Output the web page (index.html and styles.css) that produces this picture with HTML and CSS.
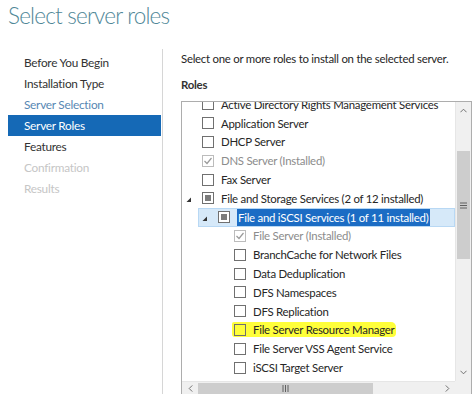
FILE: index.html
```html
<!DOCTYPE html>
<html lang="en">

<head>
    <meta charset="UTF-8">
    <title>Add Roles and Features Wizard</title>
    <link rel="stylesheet" href="styles.css">
</head>

<body>
    <div class="title">Select server roles</div>
    <div class="page">
        <ul class="steps">
            <li>Before You Begin</li>
            <li>Installation Type</li>
            <li class="visited">Server Selection</li>
            <li class="current">Server Roles</li>
            <li>Features</li>
            <li class="disabled">Confirmation</li>
            <li class="disabled">Results</li>
        </ul>
        <div class="content">
            <p class="lead">Select one or more roles to install on the selected server.</p>
            <h2 class="label">Roles</h2>
            <div class="listbox">
                <div class="viewport">
                    <ul class="tree">
                        <li class="row"><span class="exp"></span><span class="cb"></span><span class="txt">Active Directory Rights Management Services</span></li>
                        <li class="row"><span class="exp"></span><span class="cb"></span><span class="txt">Application Server</span></li>
                        <li class="row"><span class="exp"></span><span class="cb"></span><span class="txt">DHCP Server</span></li>
                        <li class="row installed"><span class="exp"></span><span class="cb checked"><svg viewBox="0 0 10 10"><polyline points="1.5,5 4,7.5 8.5,2"/></svg></span><span class="txt">DNS Server (Installed)</span></li>
                        <li class="row"><span class="exp"></span><span class="cb"></span><span class="txt">Fax Server</span></li>
                        <li class="row"><span class="exp open"><svg viewBox="0 0 6 6"><polygon points="5,0.5 5,5 0.5,5"/></svg></span><span class="cb partial"></span><span class="txt">File and Storage Services (2 of 12 installed)</span></li>
                        <li class="row lvl1 selected"><span class="exp open"><svg viewBox="0 0 6 6"><polygon points="5,0.5 5,5 0.5,5"/></svg></span><span class="cb partial"></span><span class="txt"><span class="sel">File and iSCSI Services (1 of 11 installed)</span></span></li>
                        <li class="row lvl2 installed"><span class="exp"></span><span class="cb checked"><svg viewBox="0 0 10 10"><polyline points="1.5,5 4,7.5 8.5,2"/></svg></span><span class="txt">File Server (Installed)</span></li>
                        <li class="row lvl2"><span class="exp"></span><span class="cb"></span><span class="txt">BranchCache for Network Files</span></li>
                        <li class="row lvl2"><span class="exp"></span><span class="cb"></span><span class="txt">Data Deduplication</span></li>
                        <li class="row lvl2"><span class="exp"></span><span class="cb"></span><span class="txt">DFS Namespaces</span></li>
                        <li class="row lvl2"><span class="exp"></span><span class="cb"></span><span class="txt">DFS Replication</span></li>
                        <li class="row lvl2"><span class="exp"></span><span class="marker"><span class="cb"></span><span class="txt">File Server Resource Manager</span></span></li>
                        <li class="row lvl2"><span class="exp"></span><span class="cb"></span><span class="txt">File Server VSS Agent Service</span></li>
                        <li class="row lvl2"><span class="exp"></span><span class="cb"></span><span class="txt">iSCSI Target Server</span></li>
                    </ul>
                </div>
                <div class="vbar">
                    <span class="btn"><svg viewBox="0 0 8 5"><polyline points="0.5,4.5 4,1 7.5,4.5"/></svg></span>
                    <span class="track">
                        <span class="thumb"><svg viewBox="0 0 7 6"><path d="M0 0.5H7M0 3H7M0 5.5H7"/></svg></span>
                    </span>
                    <span class="btn"><svg viewBox="0 0 8 5"><polyline points="0.5,0.5 4,4 7.5,0.5"/></svg></span>
                </div>
                <div class="hbar">
                    <span class="btn"><svg viewBox="0 0 5 8"><polyline points="4.5,0.5 1,4 4.5,7.5"/></svg></span>
                    <span class="track">
                        <span class="thumb"><svg viewBox="0 0 6 7"><path d="M0.5 0V7M3 0V7M5.5 0V7"/></svg></span>
                    </span>
                    <span class="btn"><svg viewBox="0 0 5 8"><polyline points="0.5,0.5 4,4 0.5,7.5"/></svg></span>
                </div>
                <div class="corner"></div>
            </div>
        </div>
    </div>
</body>

</html>
```

FILE: styles.css
```css
*{
    margin: 0;padding: 0;
    box-sizing: border-box;
}
ul{
    list-style: none;
}
body{
    width: 474px;
    height: 394px;
    overflow: hidden;
    background: #fff;
    font-family: Lato, "Open Sans", sans-serif;
    font-size: 11.4px;
    letter-spacing: -0.25px;
    color: #262626;
}
.title{
    height: 49px;
    padding: 1px 0 0 8px;
    font-size: 22.5px;
    font-weight: 300;
    line-height: 30px;
    letter-spacing: -0.8px;
    color: #508797;
}
.page{
    display: flex;
    height: 345px;
}
/* left wizard steps */
.steps{
    width: 163px;
    padding: 3px 1px 0 8px;
    border-right: 1px solid #d6d6d6;
    font-size: 11.8px;
}
.steps li{
    height: 21px;
    line-height: 21px;
    padding-left: 16px;
    color: #333;
}
.steps .visited{
    color: #5787b3;
}
.steps .current{
    background: #1569b6;
    color: #fff;
}
.steps .disabled{
    color: #c6c6c6;
}
/* right side */
.content{
    flex: 1;
    padding: 1px 2px 0 18px;
}
.lead{
    height: 26px;
    line-height: 18px;
}
.label{
    height: 25px;
    font-size: 11.4px;
    font-weight: 700;
    line-height: 18px;
    color: #333;
}
.listbox{
    display: grid;
    grid-template-columns: 1fr 16px;
    grid-template-rows: 1fr 14px;
    height: 295px;
    border: 1px solid #adadad;
}
.viewport{
    overflow: hidden;
}
.tree{
    margin-top: -7px;
}
.row{
    display: flex;
    align-items: center;
    height: 18.8px;
    padding-left: 4px;
    white-space: nowrap;
}
.lvl1{
    margin-left: 16px;
}
.lvl2{
    margin-left: 32px;
}
.exp{
    width: 16px;
    height: 100%;
    display: flex;
    align-items: center;
}
.exp svg{
    width: 6px;
    height: 6px;
    margin-top: 3px;
    fill: #333;
}
.cb{
    position: relative;
    width: 12px;
    height: 12px;
    border: 1px solid #707070;
    background: #fff;
    margin-right: 7px;
    flex: none;
}
.cb svg{
    display: block;
    width: 10px;
    height: 10px;
    fill: none;
    stroke: #9a9a9a;
    stroke-width: 1.2;
}
.installed .cb{
    border-color: #bcbcbc;
}
.installed .txt{
    color: #8c8c8c;
}
.partial::after{
    content: "";
    position: absolute;
    left: 2px;
    top: 2px;
    width: 6px;
    height: 6px;
    background: #7c7c7c;
}
.selected{
    background: #d6e9f9;
    border: 1px solid #b8d8f4;
    padding-left: 3px;
}
.sel{
    background: #1b6cc4;
    color: #fff;
    padding: 2px 1px 2px 1px;
}
.marker{
    display: flex;
    align-items: center;
    height: 15px;
    padding: 0 2px 0 2px;
    margin-left: -2px;
    background: #ffff3a;
    border-radius: 2px 5px 4px 3px;
}
.marker .cb{
    background: transparent;
}
/* scrollbars */
.vbar, .hbar, .corner{
    background: #f0f0f0;
}
.vbar{
    display: flex;
    flex-direction: column;
    border-left: 1px solid #e6e6e6;
}
.hbar{
    display: flex;
    border-top: 1px solid #e6e6e6;
}
.btn{
    display: flex;
    align-items: center;
    justify-content: center;
    flex: none;
}
.vbar .btn{
    height: 17px;
}
.hbar .btn{
    width: 16px;
}
.btn svg{
    width: 7px;
    height: 7px;
    fill: none;
    stroke: #606060;
    stroke-width: 1;
}
.track{
    flex: 1;
    display: flex;
}
.vbar .track{
    flex-direction: column;
    padding-top: 32px;
}
.vbar .thumb{
    height: 108px;
    margin: 0 1px;
}
.hbar .thumb{
    width: 175px;
    margin: 1px 0;
}
.thumb{
    display: flex;
    align-items: center;
    justify-content: center;
    background: #cdcdcd;
}
.thumb svg{
    width: 7px;
    height: 7px;
    fill: none;
    stroke: #606060;
    stroke-width: 1;
}
```
